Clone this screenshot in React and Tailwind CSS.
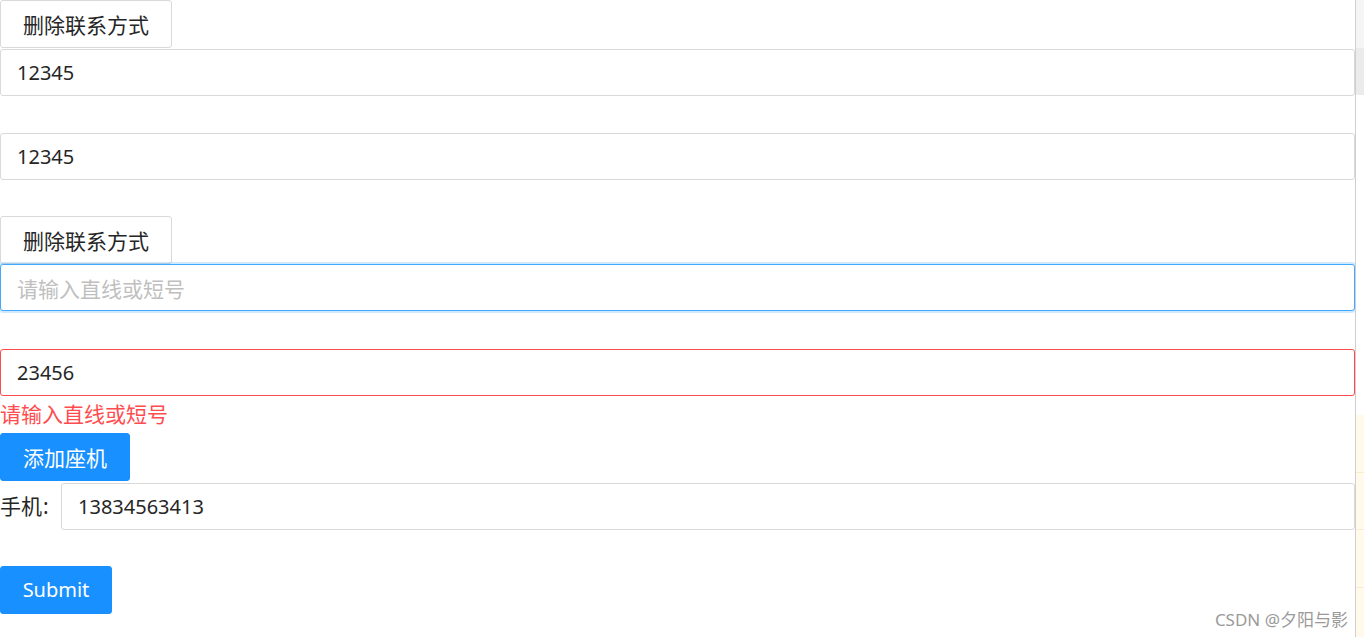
import React from "react";

const font = { fontFamily: '"Noto Sans", "Noto Sans CJK SC", sans-serif' };

function Btn({ children, primary, className = "" }) {
  return (
    <button
      className={
        "h-[48px] rounded-[3px] border leading-none flex items-center justify-center " +
        (primary
          ? "bg-[#1890ff] border-[#1890ff] text-white "
          : "bg-white border-[#d9d9d9] text-[#262626] ") +
        className
      }
    >
      {children}
    </button>
  );
}

function Field({ value, placeholder, state, className = "" }) {
  const border =
    state === "focus"
      ? "border-[#40a9ff] shadow-[0_0_0_2px_rgba(24,144,255,0.2)]"
      : state === "error"
      ? "border-[#ff4d4f]"
      : "border-[#d9d9d9]";
  return (
    <div
      className={
        "h-[47px] rounded-[3px] border bg-white flex items-center pl-[16px] text-[20px] " +
        border +
        " " +
        className
      }
    >
      {value ? (
        <span className="text-[#262626]">{value}</span>
      ) : (
        <span className="text-[#bfbfbf] text-[21px] pt-[4px]">{placeholder}</span>
      )}
    </div>
  );
}

export default function App() {
  return (
    <div className="relative h-[637px] w-[1364px] overflow-hidden bg-white flex" style={font}>
      <div className="w-[1355px] flex flex-col">
        <Btn className="w-[172px] text-[21px] pt-[3px]">删除联系方式</Btn>
        <Field value="12345" className="mt-[1px]" />
        <Field value="12345" className="mt-[37px]" />
        <Btn className="w-[172px] mt-[36px] text-[21px] pt-[3px]">删除联系方式</Btn>
        <Field placeholder="请输入直线或短号" state="focus" />
        <Field value="23456" state="error" className="mt-[38px] h-[46px]" />
        <div className="h-[37px] flex items-center text-[21px] text-[#ff4d4f] leading-none">
          请输入直线或短号
        </div>
        <Btn primary className="w-[130px] h-[47px] text-[21px] pt-[2px]">添加座机</Btn>
        <div className="mt-[2px] flex items-center">
          <div className="w-[61px] flex items-center text-[21px] text-[#262626] pt-[1px]">
            <span>手机</span>
            <span className="ml-[1px]">:</span>
          </div>
          <Field value="13834563413" className="flex-1" />
        </div>
        <Btn primary className="w-[112px] mt-[36px] text-[20px]">Submit</Btn>
      </div>
      <div className="w-[9px] border-l border-[#cfcfcf] flex flex-col">
        <div className="h-[48px] bg-[#f5f5f5]" />
        <div className="h-[47px] bg-[#ebebeb]" />
        <div className="h-[320px] bg-white" />
        <div className="flex-1 bg-[#fffaea] flex flex-col">
          <div className="h-[58px] border-b border-[#f7eccc]" />
          <div className="h-[57px] border-b border-[#f7eccc]" />
          <div className="h-[58px] border-b border-[#f7eccc]" />
        </div>
      </div>
      <div className="absolute right-[16px] bottom-[9px] text-[17px] text-[#9a9a9a] leading-none [text-shadow:0_0_1px_rgba(255,255,255,0.8)]">
        CSDN @夕阳与影
      </div>
    </div>
  );
}
